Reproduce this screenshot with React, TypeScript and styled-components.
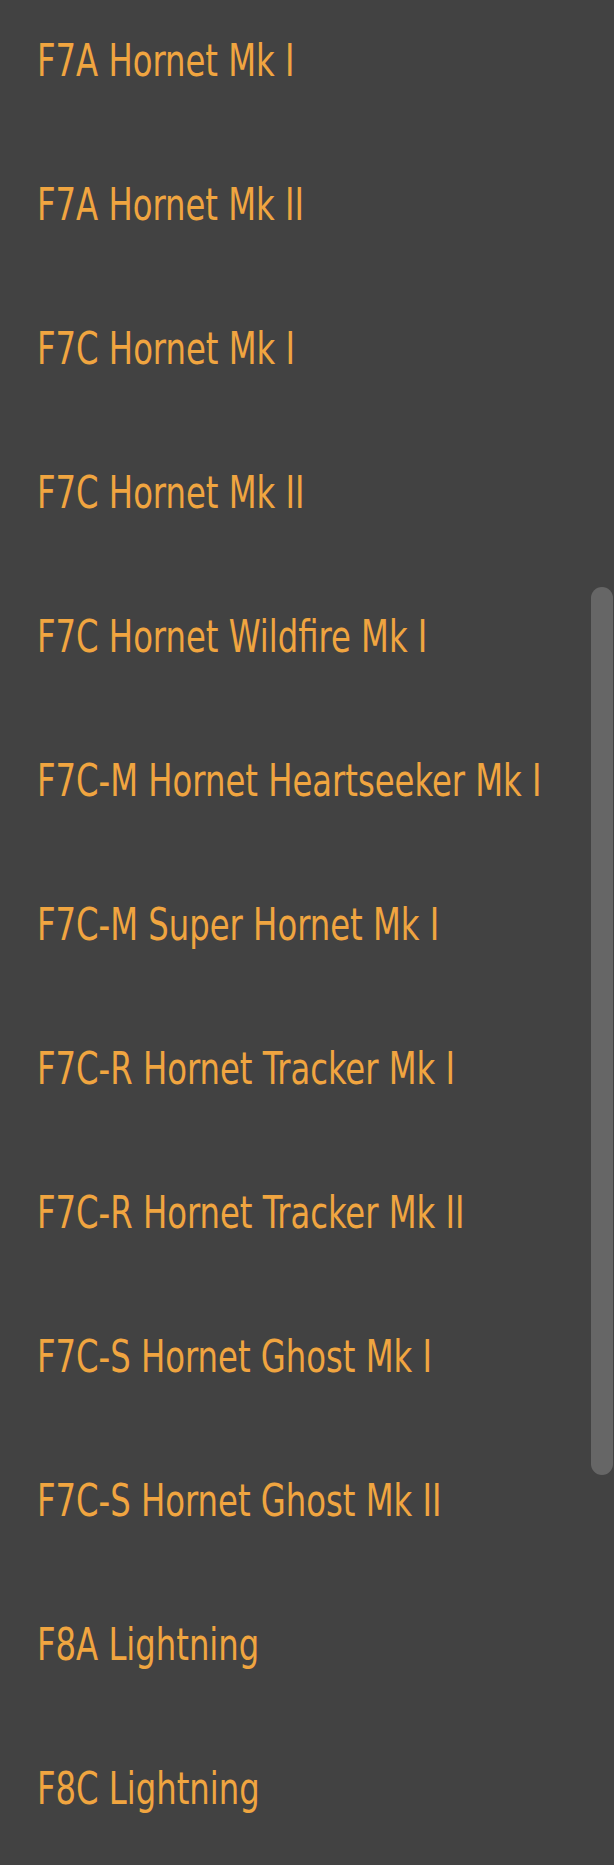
import React from "react";
import styled, { createGlobalStyle } from "styled-components";

const GlobalStyle = createGlobalStyle`
  html, body {
    margin: 0;
    padding: 0;
    background: #424242;
  }
  body {
    font-family: "DejaVu Sans Condensed", "Liberation Sans Narrow", sans-serif;
  }
`;

const Panel = styled.div`
  position: relative;
  width: 614px;
  height: 1865px;
  overflow: hidden;
  background: #424242;
`;

const List = styled.ul`
  list-style: none;
  margin: -11px 0 0;
  padding: 0;
  display: flex;
  flex-direction: column;
`;

const Item = styled.li`
  height: 144px;
  line-height: 144px;
  padding-left: 37px;
  white-space: nowrap;
`;

const Label = styled.span`
  display: inline-block;
  font-size: 44px;
  color: #f0a540;
  transform: scaleX(0.815);
  transform-origin: left center;
`;

/* scroll thumb sitting over the list's right edge */
const Thumb = styled.div`
  position: absolute;
  top: 587px;
  right: 1px;
  width: 22px;
  height: 888px;
  border-radius: 11px;
  background: #666666;
`;

const ships = [
  "F7A Hornet Mk I",
  "F7A Hornet Mk II",
  "F7C Hornet Mk I",
  "F7C Hornet Mk II",
  "F7C Hornet Wildfire Mk I",
  "F7C-M Hornet Heartseeker Mk I",
  "F7C-M Super Hornet Mk I",
  "F7C-R Hornet Tracker Mk I",
  "F7C-R Hornet Tracker Mk II",
  "F7C-S Hornet Ghost Mk I",
  "F7C-S Hornet Ghost Mk II",
  "F8A Lightning",
  "F8C Lightning",
];

export default function App() {
  return (
    <>
      <GlobalStyle />
      <Panel>
        <List>
          {ships.map((name) => (
            <Item key={name}>
              <Label>{name}</Label>
            </Item>
          ))}
        </List>
        <Thumb />
      </Panel>
    </>
  );
}
